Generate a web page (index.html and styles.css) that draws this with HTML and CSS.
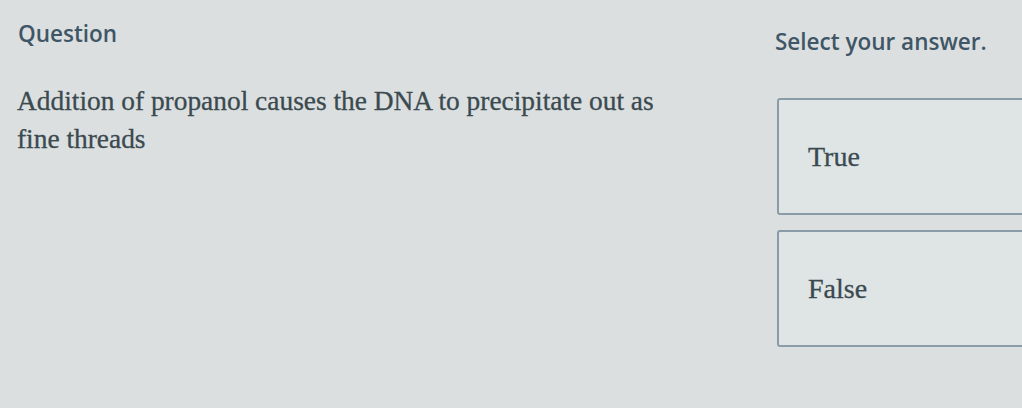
FILE: index.html
```html
<!DOCTYPE html>
<html lang="en">
<head>
    <meta charset="UTF-8">
    <meta name="viewport" content="width=device-width, initial-scale=1.0">
    <title>Question</title>
    <link rel="stylesheet" href="styles.css">
</head>
<body>
    <main class="quiz">
        <section class="question">
            <h2 class="label">Question</h2>
            <p class="prompt">Addition of propanol causes the DNA to precipitate out as fine threads</p>
        </section>

        <section class="answers">
            <h2 class="label answers-title">Select your answer.</h2>
            <div class="option">True</div>
            <div class="option">False</div>
        </section>
    </main>
</body>
</html>
```

FILE: styles.css
```css
body {
    margin: 0;
    background-color: #dcdfdf;
    overflow: hidden;
    height: 408px;
}
.quiz {
    display: grid;
    grid-template-columns: 745px 320px;
    column-gap: 14px;
    padding: 19px 0 0 18px;
}
.label {
    font-family: "Open Sans", sans-serif;
    font-weight: 600;
    font-size: 22.5px;
    line-height: 30px;
    color: #3f5667;
    margin: 0;
}
.prompt {
    font-family: "Liberation Serif", serif;
    font-size: 27.4px;
    line-height: 38px;
    color: #3a4a50;
    -webkit-text-stroke: 0.3px #3a4a50;
    margin: 33px 0 0 -1px;
    max-width: 680px;
}
.answers {
    display: flex;
    flex-direction: column;
    gap: 15px;
    margin-top: 8px;
}
.answers-title {
    margin: 0 0 26px -2px;
}
/* answer tiles run off the right edge of the panel */
.option {
    height: 117px;
    box-sizing: border-box;
    border: 2px solid #8a9ca8;
    border-radius: 3px;
    background-color: #dfe4e5;
    display: flex;
    align-items: center;
    padding-left: 29px;
    font-family: "Liberation Serif", serif;
    font-size: 28px;
    color: #3a4a50;
    -webkit-text-stroke: 0.3px #3a4a50;
}
```
